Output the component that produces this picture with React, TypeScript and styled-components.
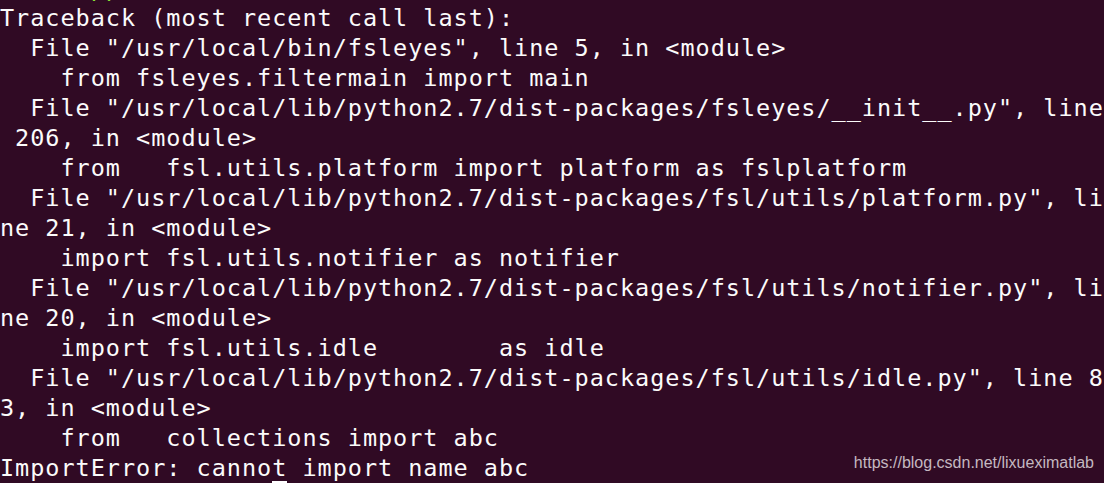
import React from "react";
import styled, { createGlobalStyle } from "styled-components";

const Global = createGlobalStyle`
  html, body { margin: 0; padding: 0; background: #300a24; }
  body { overflow: hidden; }
`;

const Screen = styled.div`
  position: relative;
  width: 1104px;
  height: 483px;
  overflow: hidden;
  background: #300a24;
`;

const Lines = styled.div`
  display: flex;
  flex-direction: column;
  margin-top: -27px;
`;

const Row = styled.div<{ $color?: string }>`
  height: 30px;
  line-height: 30px;
  white-space: pre;
  font-family: "DejaVu Sans Mono", monospace;
  font-size: 23.5px;
  letter-spacing: 0.972px;
  color: ${(p) => p.$color || "#fbfbfb"};
`;

const Cursor = styled.div`
  width: 15px;
  height: 30px;
  margin-top: -2px;
  margin-left: 272px;
  background: #ffffff;
`;

const Watermark = styled.div`
  position: absolute;
  right: 10px;
  bottom: 11px;
  font-family: "Liberation Sans", Arial, sans-serif;
  font-size: 16px;
  color: #c4b8c0;
`;

const lines = [
  "Traceback (most recent call last):",
  '  File "/usr/local/bin/fsleyes", line 5, in <module>',
  "    from fsleyes.filtermain import main",
  '  File "/usr/local/lib/python2.7/dist-packages/fsleyes/__init__.py", line',
  " 206, in <module>",
  "    from   fsl.utils.platform import platform as fslplatform",
  '  File "/usr/local/lib/python2.7/dist-packages/fsl/utils/platform.py", li',
  "ne 21, in <module>",
  "    import fsl.utils.notifier as notifier",
  '  File "/usr/local/lib/python2.7/dist-packages/fsl/utils/notifier.py", li',
  "ne 20, in <module>",
  "    import fsl.utils.idle        as idle",
  '  File "/usr/local/lib/python2.7/dist-packages/fsl/utils/idle.py", line 8',
  "3, in <module>",
  "    from   collections import abc",
  "ImportError: cannot import name abc",
];

export default function App() {
  return (
    <>
      <Global />
      <Screen>
        <Lines>
          <Row $color="#8ae234" aria-hidden="true">{"      pp"}</Row>
          {lines.map((l, i) => (
            <Row key={i}>{l}</Row>
          ))}
          <Cursor />
        </Lines>
        <Watermark>https://blog.csdn.net/lixueximatlab</Watermark>
      </Screen>
    </>
  );
}
